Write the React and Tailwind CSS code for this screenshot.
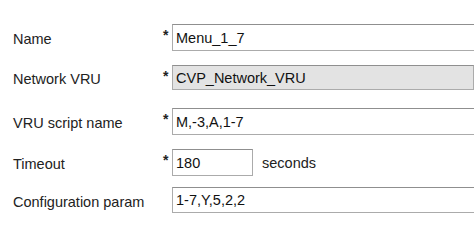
const fields = [
  { label: 'Name', value: 'Menu_1_7', required: true, width: 'w-[320px]', top: 'mt-[24px]', height: 'h-[27px]' },
  { label: 'Network VRU', value: 'CVP_Network_VRU', required: true, width: 'w-[302px]', top: 'mt-[14px]', height: 'h-[25px]', disabled: true },
  { label: 'VRU script name', value: 'M,-3,A,1-7', required: true, width: 'w-[320px]', top: 'mt-[18px]', height: 'h-[27px]' },
  { label: 'Timeout', value: '180', required: true, width: 'w-[81px]', top: 'mt-[14px]', height: 'h-[27px]', suffix: 'seconds' },
  { label: 'Configuration param', value: '1-7,Y,5,2,2', required: false, width: 'w-[320px]', top: 'mt-[11px]', height: 'h-[26px]' },
];

function FieldRow({ field }) {
  return (
    <div className={`flex items-center ${field.top} ${field.height}`}>
      <label className="w-[163px] shrink-0 pl-[13px] pt-[5px] text-[14.5px] text-[#222]">{field.label}</label>
      <span className="w-[9px] shrink-0 self-start pt-[2px] text-[14px] font-bold leading-[18px] text-[#222]">
        {field.required ? '*' : ''}
      </span>
      <input
        readOnly
        value={field.value}
        className={`${field.width} ${field.height} shrink-0 border border-[#ababab] border-t-[#8f8f8f] pl-[3px] text-[14.5px] text-[#111] outline-none ${
          field.disabled ? 'bg-[#e3e3e3]' : 'bg-white'
        }`}
      />
      {field.suffix && <span className="ml-[9px] pt-[3px] text-[14.5px] text-[#222]">{field.suffix}</span>}
    </div>
  );
}

export default function App() {
  return (
    <div
      className="w-[474px] h-[227px] overflow-hidden bg-white"
      style={{ fontFamily: '"Liberation Sans", Arial, sans-serif' }}
    >
      {fields.map((f) => (
        <FieldRow key={f.label} field={f} />
      ))}
    </div>
  );
}
